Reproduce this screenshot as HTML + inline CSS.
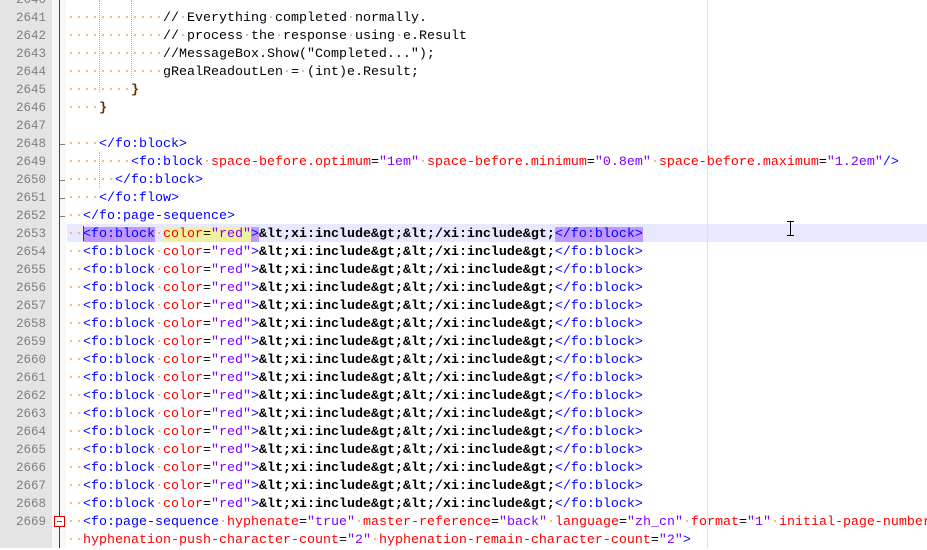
<!DOCTYPE html>
<html><head><meta charset="utf-8"><style>
body{margin:0;width:927px;height:548px;overflow:hidden;background:#fff;position:relative;font-family:"Liberation Mono",monospace;}
#gut{position:absolute;left:0;top:0;width:52px;height:548px;background:#e4e4e4;}
#fold{position:absolute;left:52px;top:0;width:14px;height:548px;background:repeating-conic-gradient(#f0f0f0 0 25%,#fff 0 50%) 0 0/2px 2px;}
#red{position:absolute;left:59px;top:0;width:1px;height:548px;background:#e00000;}
#edge{position:absolute;left:707px;top:0;width:1px;height:548px;background:#b8eeee;}
.tick{position:absolute;left:60px;width:5px;height:1px;background:#808080;}
.g{position:absolute;width:1px;border-left:1px dotted #b0b0b0;}
.ln{position:absolute;left:0;width:46px;text-align:right;font-size:12.5px;color:#808080;height:18px;line-height:18px;margin-top:1px;}
.l{position:absolute;left:67px;height:18px;line-height:18px;font-size:13.33px;white-space:pre;color:#000;margin-top:2px;}
.d{display:inline-block;height:18px;vertical-align:top;background:radial-gradient(circle at 4px 7px,#f0a860 0.8px,transparent 1.1px) 0 0/8px 18px repeat-x;}
.t{color:#0000ff}.a{color:#ff0000}.v{color:#8000ff}.b{font-weight:bold}
.hp{background:#c098ff}.hy{background:#f0f0a0}
</style></head><body>
<div id="gut"></div><div id="fold"></div>
<div style="position:absolute;left:67px;top:224px;width:860px;height:18px;background:#e8e8ff"></div>
<div id="red"></div><div id="edge"></div>
<div class="g" style="left:99px;top:0;height:92px"></div>
<div class="g" style="left:131px;top:0;height:78px"></div>
<div class="g" style="left:99px;top:152px;height:36px"></div>
<div class="tick" style="top:144px"></div><div class="tick" style="top:180px"></div><div class="tick" style="top:198px"></div><div class="tick" style="top:216px"></div>
<div style="position:absolute;left:54px;top:516px;width:9px;height:9px;border:1px solid #d00000;background:#fff"><div style="position:absolute;left:2px;top:4px;width:5px;height:1px;background:#555"></div></div>
<div class="ln" style="top:-10px">2640</div>
<div class="ln" style="top:8px">2641</div><div class="ln" style="top:26px">2642</div><div class="ln" style="top:44px">2643</div><div class="ln" style="top:62px">2644</div><div class="ln" style="top:80px">2645</div><div class="ln" style="top:98px">2646</div><div class="ln" style="top:116px">2647</div><div class="ln" style="top:134px">2648</div><div class="ln" style="top:152px">2649</div><div class="ln" style="top:170px">2650</div><div class="ln" style="top:188px">2651</div><div class="ln" style="top:206px">2652</div><div class="ln" style="top:224px">2653</div><div class="ln" style="top:242px">2654</div><div class="ln" style="top:260px">2655</div><div class="ln" style="top:278px">2656</div><div class="ln" style="top:296px">2657</div><div class="ln" style="top:314px">2658</div><div class="ln" style="top:332px">2659</div><div class="ln" style="top:350px">2660</div><div class="ln" style="top:368px">2661</div><div class="ln" style="top:386px">2662</div><div class="ln" style="top:404px">2663</div><div class="ln" style="top:422px">2664</div><div class="ln" style="top:440px">2665</div><div class="ln" style="top:458px">2666</div><div class="ln" style="top:476px">2667</div><div class="ln" style="top:494px">2668</div><div class="ln" style="top:512px">2669</div>

<div class="l" style="top:8px"><span class="d">            </span>//<span class="d"> </span>Everything<span class="d"> </span>completed<span class="d"> </span>normally.</div>
<div class="l" style="top:26px"><span class="d">            </span>//<span class="d"> </span>process<span class="d"> </span>the<span class="d"> </span>response<span class="d"> </span>using<span class="d"> </span>e.Result</div>
<div class="l" style="top:44px"><span class="d">            </span>//MessageBox.Show("Completed...");</div>
<div class="l" style="top:62px"><span class="d">            </span>gRealReadoutLen<span class="d"> </span>=<span class="d"> </span>(int)e.Result;</div>
<div class="l" style="top:80px"><span class="d">        </span><span class="b" style="color:#603000">}</span></div>
<div class="l" style="top:98px"><span class="d">    </span><span class="b" style="color:#603000">}</span></div>
<div class="l" style="top:134px"><span class="d">    </span><span class="t">&lt;/fo:block&gt;</span></div>
<div class="l" style="top:152px"><span class="d">        </span><span class="t">&lt;fo:block</span><span class="d"> </span><span class="a">space-before.optimum</span>=<span class="v">"1em"</span><span class="d"> </span><span class="a">space-before.minimum</span>=<span class="v">"0.8em"</span><span class="d"> </span><span class="a">space-before.maximum</span>=<span class="v">"1.2em"</span><span class="t">/&gt;</span></div>
<div class="l" style="top:170px"><span class="d">      </span><span class="t">&lt;/fo:block&gt;</span></div>
<div class="l" style="top:188px"><span class="d">    </span><span class="t">&lt;/fo:flow&gt;</span></div>
<div class="l" style="top:206px"><span class="d">  </span><span class="t">&lt;/fo:page-sequence&gt;</span></div>
<div class="l" style="top:224px"><span class="d">  </span><span class="t hp">&lt;fo:block</span><span class="d"> </span><span class="hy"><span class="a">color</span>=<span class="v">"red"</span></span><span class="t hp">&gt;</span><span class="b">&amp;lt;xi:include&amp;gt;&amp;lt;/xi:include&amp;gt;</span><span class="t hp">&lt;/fo:block&gt;</span></div>
<div class="l" style="top:242px"><span class="d">  </span><span class="t">&lt;fo:block</span><span class="d"> </span><span class="a">color</span>=<span class="v">"red"</span><span class="t">&gt;</span><span class="b">&amp;lt;xi:include&amp;gt;&amp;lt;/xi:include&amp;gt;</span><span class="t">&lt;/fo:block&gt;</span></div>
<div class="l" style="top:260px"><span class="d">  </span><span class="t">&lt;fo:block</span><span class="d"> </span><span class="a">color</span>=<span class="v">"red"</span><span class="t">&gt;</span><span class="b">&amp;lt;xi:include&amp;gt;&amp;lt;/xi:include&amp;gt;</span><span class="t">&lt;/fo:block&gt;</span></div>
<div class="l" style="top:278px"><span class="d">  </span><span class="t">&lt;fo:block</span><span class="d"> </span><span class="a">color</span>=<span class="v">"red"</span><span class="t">&gt;</span><span class="b">&amp;lt;xi:include&amp;gt;&amp;lt;/xi:include&amp;gt;</span><span class="t">&lt;/fo:block&gt;</span></div>
<div class="l" style="top:296px"><span class="d">  </span><span class="t">&lt;fo:block</span><span class="d"> </span><span class="a">color</span>=<span class="v">"red"</span><span class="t">&gt;</span><span class="b">&amp;lt;xi:include&amp;gt;&amp;lt;/xi:include&amp;gt;</span><span class="t">&lt;/fo:block&gt;</span></div>
<div class="l" style="top:314px"><span class="d">  </span><span class="t">&lt;fo:block</span><span class="d"> </span><span class="a">color</span>=<span class="v">"red"</span><span class="t">&gt;</span><span class="b">&amp;lt;xi:include&amp;gt;&amp;lt;/xi:include&amp;gt;</span><span class="t">&lt;/fo:block&gt;</span></div>
<div class="l" style="top:332px"><span class="d">  </span><span class="t">&lt;fo:block</span><span class="d"> </span><span class="a">color</span>=<span class="v">"red"</span><span class="t">&gt;</span><span class="b">&amp;lt;xi:include&amp;gt;&amp;lt;/xi:include&amp;gt;</span><span class="t">&lt;/fo:block&gt;</span></div>
<div class="l" style="top:350px"><span class="d">  </span><span class="t">&lt;fo:block</span><span class="d"> </span><span class="a">color</span>=<span class="v">"red"</span><span class="t">&gt;</span><span class="b">&amp;lt;xi:include&amp;gt;&amp;lt;/xi:include&amp;gt;</span><span class="t">&lt;/fo:block&gt;</span></div>
<div class="l" style="top:368px"><span class="d">  </span><span class="t">&lt;fo:block</span><span class="d"> </span><span class="a">color</span>=<span class="v">"red"</span><span class="t">&gt;</span><span class="b">&amp;lt;xi:include&amp;gt;&amp;lt;/xi:include&amp;gt;</span><span class="t">&lt;/fo:block&gt;</span></div>
<div class="l" style="top:386px"><span class="d">  </span><span class="t">&lt;fo:block</span><span class="d"> </span><span class="a">color</span>=<span class="v">"red"</span><span class="t">&gt;</span><span class="b">&amp;lt;xi:include&amp;gt;&amp;lt;/xi:include&amp;gt;</span><span class="t">&lt;/fo:block&gt;</span></div>
<div class="l" style="top:404px"><span class="d">  </span><span class="t">&lt;fo:block</span><span class="d"> </span><span class="a">color</span>=<span class="v">"red"</span><span class="t">&gt;</span><span class="b">&amp;lt;xi:include&amp;gt;&amp;lt;/xi:include&amp;gt;</span><span class="t">&lt;/fo:block&gt;</span></div>
<div class="l" style="top:422px"><span class="d">  </span><span class="t">&lt;fo:block</span><span class="d"> </span><span class="a">color</span>=<span class="v">"red"</span><span class="t">&gt;</span><span class="b">&amp;lt;xi:include&amp;gt;&amp;lt;/xi:include&amp;gt;</span><span class="t">&lt;/fo:block&gt;</span></div>
<div class="l" style="top:440px"><span class="d">  </span><span class="t">&lt;fo:block</span><span class="d"> </span><span class="a">color</span>=<span class="v">"red"</span><span class="t">&gt;</span><span class="b">&amp;lt;xi:include&amp;gt;&amp;lt;/xi:include&amp;gt;</span><span class="t">&lt;/fo:block&gt;</span></div>
<div class="l" style="top:458px"><span class="d">  </span><span class="t">&lt;fo:block</span><span class="d"> </span><span class="a">color</span>=<span class="v">"red"</span><span class="t">&gt;</span><span class="b">&amp;lt;xi:include&amp;gt;&amp;lt;/xi:include&amp;gt;</span><span class="t">&lt;/fo:block&gt;</span></div>
<div class="l" style="top:476px"><span class="d">  </span><span class="t">&lt;fo:block</span><span class="d"> </span><span class="a">color</span>=<span class="v">"red"</span><span class="t">&gt;</span><span class="b">&amp;lt;xi:include&amp;gt;&amp;lt;/xi:include&amp;gt;</span><span class="t">&lt;/fo:block&gt;</span></div>
<div class="l" style="top:494px"><span class="d">  </span><span class="t">&lt;fo:block</span><span class="d"> </span><span class="a">color</span>=<span class="v">"red"</span><span class="t">&gt;</span><span class="b">&amp;lt;xi:include&amp;gt;&amp;lt;/xi:include&amp;gt;</span><span class="t">&lt;/fo:block&gt;</span></div>
<div class="l" style="top:512px"><span class="d">  </span><span class="t">&lt;fo:page-sequence</span><span class="d"> </span><span class="a">hyphenate</span>=<span class="v">"true"</span><span class="d"> </span><span class="a">master-reference</span>=<span class="v">"back"</span><span class="d"> </span><span class="a">language</span>=<span class="v">"zh_cn"</span><span class="d"> </span><span class="a">format</span>=<span class="v">"1"</span><span class="d"> </span><span class="a">initial-page-number</span></div>
<div class="l" style="top:530px"><span class="d">  </span><span class="a">hyphenation-push-character-count</span>=<span class="v">"2"</span><span class="d"> </span><span class="a">hyphenation-remain-character-count</span>=<span class="v">"2"</span><span class="t">&gt;</span></div>
<div style="position:absolute;left:83px;top:226px;width:1px;height:15px;background:#8000ff"></div>
<div style="position:absolute;left:790px;top:221px;width:1px;height:15px;background:#000"></div>
<div style="position:absolute;left:787px;top:221px;width:7px;height:1px;background:#000"></div>
<div style="position:absolute;left:787px;top:235px;width:7px;height:1px;background:#000"></div>
</body></html>
